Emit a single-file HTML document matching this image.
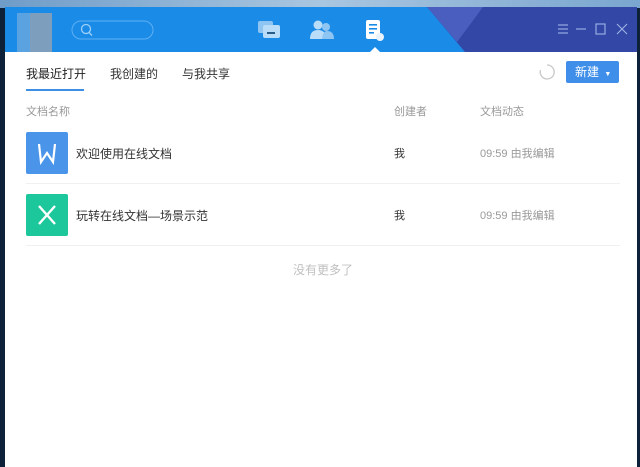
<!DOCTYPE html>
<html><head><meta charset="utf-8"><style>
*{margin:0;padding:0;box-sizing:border-box}
body{width:640px;height:467px;overflow:hidden;background:#0d2238;font-family:"Liberation Sans","Noto Sans CJK SC",sans-serif;position:relative}
.top{position:absolute;left:0;top:0;width:640px;height:8px;background:linear-gradient(90deg,#6f9cc8,#a9c6e0 50%,#7aa6cf)}
.win{position:absolute;left:5px;top:7px;width:632px;height:460px;background:#fff;overflow:hidden}
.hdr{position:absolute;left:0;top:0;width:632px;height:45px;background:#1b8be8;overflow:hidden}
.t{position:absolute;font-size:12px;color:#333;white-space:nowrap}
.g{color:#999}
</style></head><body>
<div class="top"></div>
<div class="win">
<div class="hdr">
<svg width="632" height="45" style="position:absolute;left:0;top:0">
<polygon points="422,0 632,0 632,45 460,45" fill="#3348a6"/>
<polygon points="422,0 478,0 452,35" fill="#4a5ec0"/>
<rect x="12" y="6" width="13" height="40" fill="#5aa3e0"/>
<rect x="25" y="6" width="22" height="40" fill="#7d9fbd"/>
<rect x="67" y="14" width="81" height="18" rx="9" fill="none" stroke="#5fb0f2" stroke-width="1"/>
<circle cx="81" cy="22" r="4.5" fill="none" stroke="#9fd0f7" stroke-width="1.3"/>
<line x1="84" y1="25.5" x2="87" y2="28.5" stroke="#9fd0f7" stroke-width="1.3"/>
<rect x="253" y="14" width="15" height="12" rx="2" fill="#8ec5f2"/>
<rect x="258" y="18" width="17" height="13" rx="2" fill="#b9dcf8"/>
<rect x="262" y="25" width="8" height="2" fill="#2a5c8a"/>
<circle cx="313" cy="18" r="4.5" fill="#b9dcf8"/><path d="M305 32 q0-9 8-9 q8 0 8 9z" fill="#b9dcf8"/>
<circle cx="321" cy="20" r="4" fill="#8ec5f2"/><path d="M317 32 q1-8 5-8 q7 0 7 8z" fill="#8ec5f2"/>
<rect x="361" y="13" width="14" height="19" rx="2" fill="#fff"/>
<rect x="364" y="17" width="8" height="1.6" fill="#1b8be8"/><rect x="364" y="21" width="8" height="1.6" fill="#1b8be8"/><rect x="364" y="25" width="5" height="1.6" fill="#1b8be8"/>
<circle cx="375" cy="30" r="4" fill="#e8f3fd"/>
<polygon points="365,45 370,40 375,45" fill="#fff"/>
<g stroke="#9fb4e6" stroke-width="1.1" fill="none">
<line x1="553" y1="18" x2="563" y2="18"/><line x1="553" y1="22" x2="563" y2="22"/><line x1="553" y1="26" x2="563" y2="26"/>
<line x1="571" y1="22" x2="581" y2="22"/>
<rect x="591" y="17" width="9" height="10"/>
<line x1="612" y1="17" x2="622" y2="27"/><line x1="622" y1="17" x2="612" y2="27"/>
</g>
</svg>
</div>
<div class="t" style="left:21px;top:58px;color:#222">我最近打开</div>
<div style="position:absolute;left:21px;top:82px;width:58px;height:2px;background:#3b8fe4"></div>
<div class="t" style="left:105px;top:58px">我创建的</div>
<div class="t" style="left:177px;top:58px">与我共享</div>
<svg width="18" height="18" style="position:absolute;left:533px;top:56px"><path d="M9 2 A7 7 0 1 1 2.5 7" fill="none" stroke="#c8c8c8" stroke-width="1.3"/></svg>
<div style="position:absolute;left:561px;top:54px;width:53px;height:22px;background:#3f8fea;border-radius:2px;color:#fff;font-size:12px;line-height:22px;padding-left:9px">新建 <span style="font-size:7px;margin-left:2px">▼</span></div>
<div class="t g" style="left:21px;top:96px;font-size:11px">文档名称</div>
<div class="t g" style="left:389px;top:96px;font-size:11px">创建者</div>
<div class="t g" style="left:475px;top:96px;font-size:11px">文档动态</div>
<svg width="42" height="42" style="position:absolute;left:21px;top:125px"><rect width="42" height="42" rx="2" fill="#4a94ea"/><path d="M13 12 L15 30 L21 21 L27 30 L29 12" fill="none" stroke="#fff" stroke-width="2.2" stroke-linejoin="miter"/></svg>
<div class="t" style="left:71px;top:138px">欢迎使用在线文档</div>
<div class="t" style="left:389px;top:138px;font-size:11px">我</div>
<div class="t g" style="left:475px;top:138px;font-size:11px">09:59 由我编辑</div>
<div style="position:absolute;left:21px;top:176px;width:594px;height:1px;background:#f0f0f0"></div>
<svg width="42" height="42" style="position:absolute;left:21px;top:187px"><rect width="42" height="42" rx="2" fill="#1cc79b"/><path d="M13 12 L29 30 M29 12 L13 30" fill="none" stroke="#fff" stroke-width="2.4"/></svg>
<div class="t" style="left:71px;top:200px">玩转在线文档—场景示范</div>
<div class="t" style="left:389px;top:200px;font-size:11px">我</div>
<div class="t g" style="left:475px;top:200px;font-size:11px">09:59 由我编辑</div>
<div style="position:absolute;left:21px;top:238px;width:594px;height:1px;background:#f0f0f0"></div>
<div class="t" style="left:288px;top:254px;color:#c0c0c0">没有更多了</div>
</div>
</body></html>
